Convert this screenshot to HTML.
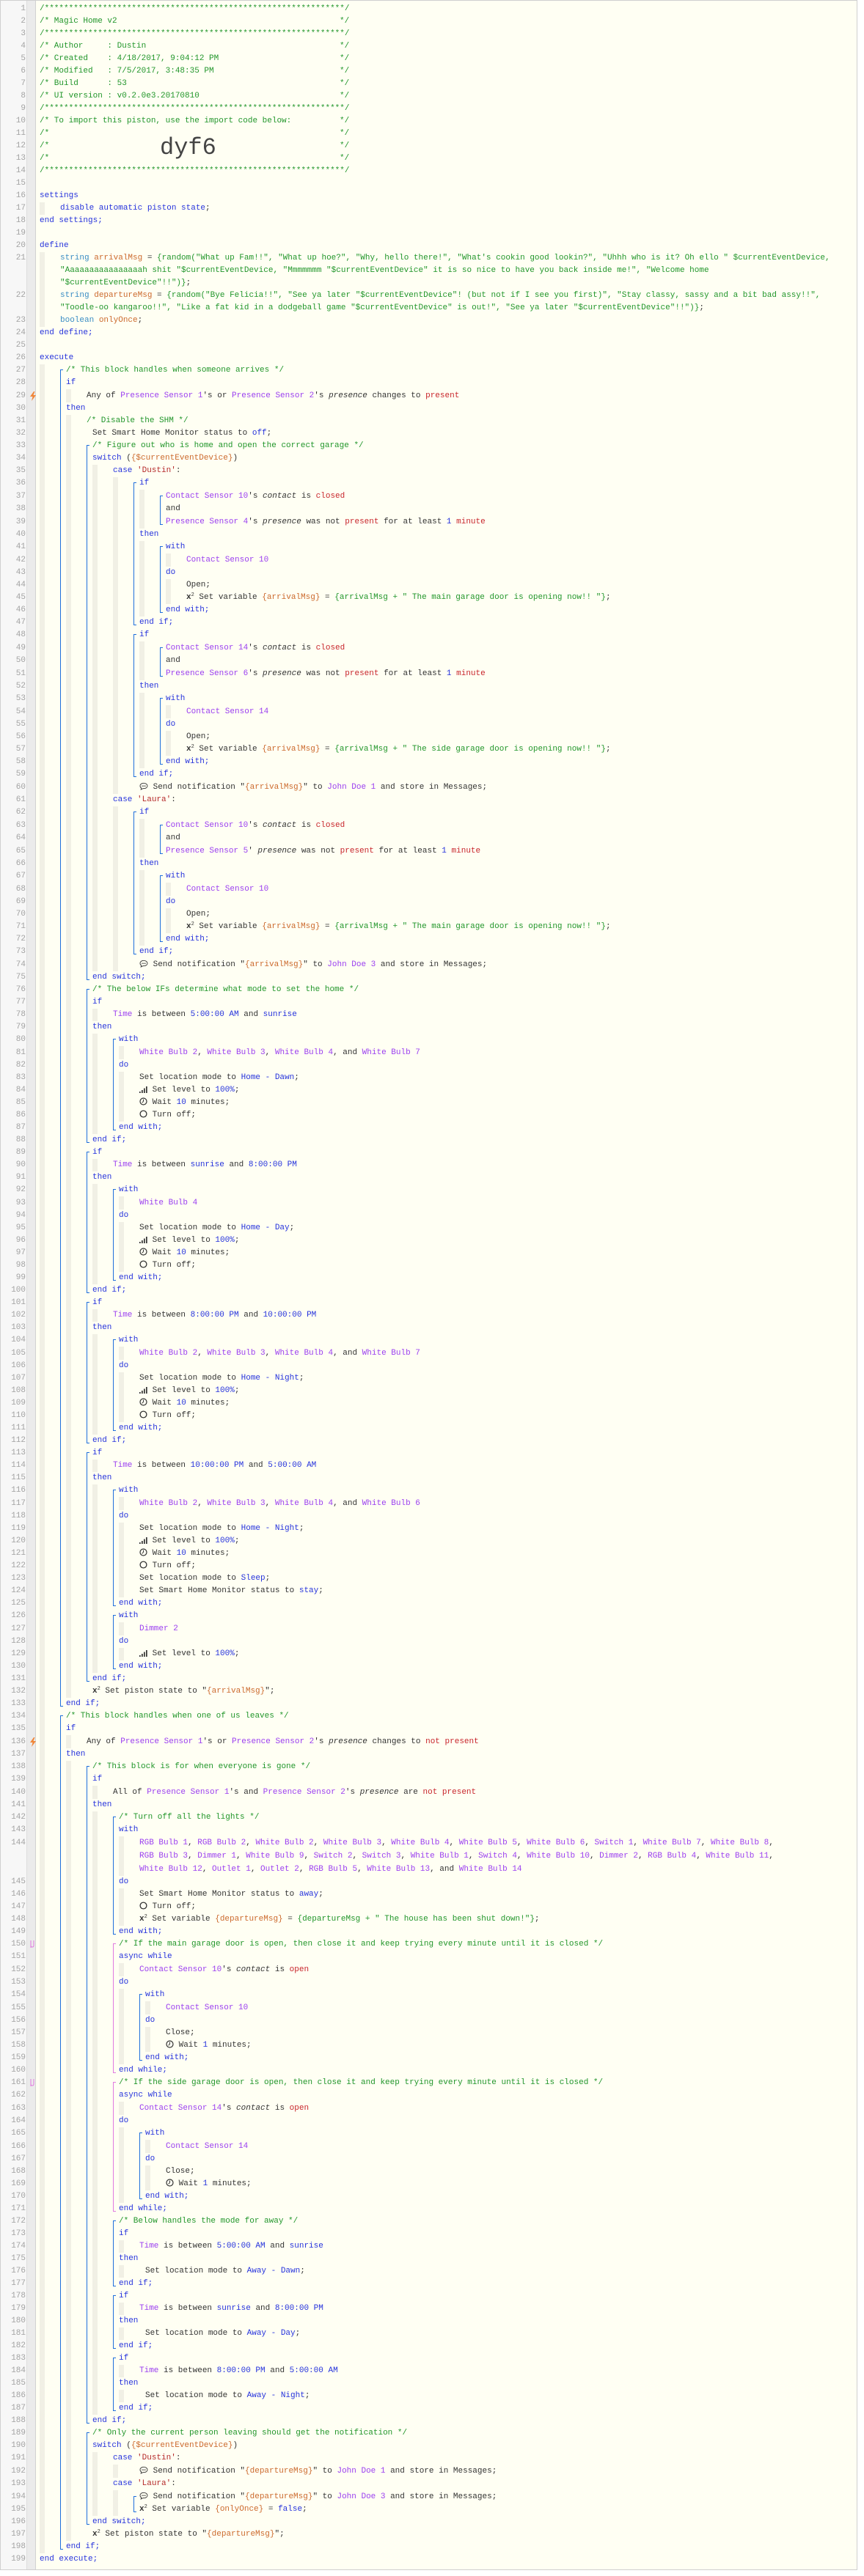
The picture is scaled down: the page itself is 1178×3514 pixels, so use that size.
<!DOCTYPE html>
<html><head><meta charset="utf-8">
<style>
html,body{margin:0;padding:0;background:#fff;width:1178px;height:3514px;overflow:hidden}
#w{position:absolute;left:0;top:0;width:1167px;height:3504px;border:1px solid #cfcfcf;background:#fffff3;overflow:hidden;font-family:"Liberation Mono",monospace;font-size:11px;color:#333}
#gb{position:absolute;left:0;top:0;width:35px;height:100%;background:#f7f7f7;border-right:1px solid #dcdcdc}
#gc{position:absolute;left:36px;top:0;width:11px;height:100%;background:#ebebeb;border-right:1px solid #d2d2d2}
#rows{position:absolute;left:0;top:3px;width:1167px}
.l{display:flex;height:17px;line-height:17px;white-space:pre;position:relative}
.l.h{height:18px;padding-top:1px;box-sizing:border-box}
ln{flex:0 0 53px;box-sizing:border-box;padding-right:19px;text-align:right;color:#a3a3a3;position:relative}
g{flex:0 0 28px;position:relative}
g::before{content:"";position:absolute;left:0;width:7px;top:0;bottom:0;background:#f1f0e5}
t,m,e,f,tq,mq,eq{flex:0 0 8px;position:relative}
m::before,t::before,e::before,mq::before,tq::before,eq::before{content:"";position:absolute;left:0;width:1px;background:#1f6fdc}
t::after,e::after,tq::after,eq::after{content:"";position:absolute;left:0;width:4px;height:1px;background:#1f6fdc}
mq::before,tq::before,eq::before,tq::after,eq::after{background:#e07ae0}
m::before,mq::before{top:0;bottom:0}
t::before,tq::before{top:7px;bottom:0}
t::after,tq::after{top:7px}
e::before,eq::before{top:0;height:12px}
e::after,eq::after{top:11px}
.h g::before,.h m::before,.h mq::before,.h e::before,.h eq::before{top:-1px}
.x{flex:0 0 auto}
k{color:#2633dc}
cm{color:#22962b}
v{color:#cc6a2e}
d{color:#9b3ff0}
r{color:#c8262c}
sl{color:#b52a2a}
ty{color:#3a8dc4}
em{font-style:italic;color:#333}
.ce{position:absolute;left:462px;top:0}
.big{position:absolute;left:217px;top:-5px;font-size:32px;line-height:32px;color:#444}
.x2{font-weight:bold}
.x2 sup{font-size:7px;line-height:0;vertical-align:4px;font-weight:normal}
svg.i{vertical-align:-2px}
.mk{position:absolute;left:40px;top:2px}
</style></head><body>
<div id="w"><div id="gb"></div><div id="gc"></div>
<div id="rows">
<div class="l"><ln>1</ln><span class="x"><cm>/**************************************************************/</cm></span></div>
<div class="l"><ln>2</ln><span class="x"><cm>/* Magic Home v2</cm></span><cm class="ce">*/</cm></div>
<div class="l"><ln>3</ln><span class="x"><cm>/**************************************************************/</cm></span></div>
<div class="l"><ln>4</ln><span class="x"><cm>/* Author     : Dustin</cm></span><cm class="ce">*/</cm></div>
<div class="l"><ln>5</ln><span class="x"><cm>/* Created    : 4/18/2017, 9:04:12 PM</cm></span><cm class="ce">*/</cm></div>
<div class="l"><ln>6</ln><span class="x"><cm>/* Modified   : 7/5/2017, 3:48:35 PM</cm></span><cm class="ce">*/</cm></div>
<div class="l"><ln>7</ln><span class="x"><cm>/* Build      : 53</cm></span><cm class="ce">*/</cm></div>
<div class="l"><ln>8</ln><span class="x"><cm>/* UI version : v0.2.0e3.20170810</cm></span><cm class="ce">*/</cm></div>
<div class="l"><ln>9</ln><span class="x"><cm>/**************************************************************/</cm></span></div>
<div class="l"><ln>10</ln><span class="x"><cm>/* To import this piston, use the import code below:</cm></span><cm class="ce">*/</cm></div>
<div class="l"><ln>11</ln><span class="x"><cm>/*</cm></span><cm class="ce">*/</cm></div>
<div class="l"><ln>12</ln><span class="x"><cm>/*</cm></span><span class="big">dyf6</span><cm class="ce">*/</cm></div>
<div class="l"><ln>13</ln><span class="x"><cm>/*</cm></span><cm class="ce">*/</cm></div>
<div class="l"><ln>14</ln><span class="x"><cm>/**************************************************************/</cm></span></div>
<div class="l"><ln>15</ln></div>
<div class="l"><ln>16</ln><span class="x"><k>settings</k></span></div>
<div class="l"><ln>17</ln><g></g><span class="x"><k>disable automatic piston state</k>;</span></div>
<div class="l"><ln>18</ln><span class="x"><k>end settings;</k></span></div>
<div class="l"><ln>19</ln></div>
<div class="l"><ln>20</ln><span class="x"><k>define</k></span></div>
<div class="l"><ln>21</ln><g></g><span class="x"><ty>string</ty> <v>arrivalMsg</v> = <cm>{random("What up Fam!!", "What up hoe?", "Why, hello there!", "What's cookin good lookin?", "Uhhh who is it? Oh ello " $currentEventDevice,</cm></span></div>
<div class="l"><ln></ln><g></g><span class="x"><cm>"Aaaaaaaaaaaaaaaah shit "$currentEventDevice, "Mmmmmmm "$currentEventDevice" it is so nice to have you back inside me!", "Welcome home</cm></span></div>
<div class="l"><ln></ln><g></g><span class="x"><cm>"$currentEventDevice"!!")}</cm>;</span></div>
<div class="l"><ln>22</ln><g></g><span class="x"><ty>string</ty> <v>departureMsg</v> = <cm>{random("Bye Felicia!!", "See ya later "$currentEventDevice"! (but not if I see you first)", "Stay classy, sassy and a bit bad assy!!",</cm></span></div>
<div class="l"><ln></ln><g></g><span class="x"><cm>"Toodle-oo kangaroo!!", "Like a fat kid in a dodgeball game "$currentEventDevice" is out!", "See ya later "$currentEventDevice"!!")}</cm>;</span></div>
<div class="l"><ln>23</ln><g></g><span class="x"><ty>boolean</ty> <v>onlyOnce</v>;</span></div>
<div class="l"><ln>24</ln><span class="x"><k>end define;</k></span></div>
<div class="l"><ln>25</ln></div>
<div class="l"><ln>26</ln><span class="x"><k>execute</k></span></div>
<div class="l"><ln>27</ln><g></g><t></t><span class="x"><cm>/* This block handles when someone arrives */</cm></span></div>
<div class="l"><ln>28</ln><g></g><m></m><span class="x"><k>if</k></span></div>
<div class="l h"><ln>29<svg class="mk" width="8" height="13" viewBox="0 0 8 13"><polygon points="5,0 0,7 3.5,7 2,13 8,5 4.5,5 6.5,0" fill="#f0873a"/></svg></ln><g></g><m></m><g></g><span class="x">Any of <d>Presence Sensor 1</d>'s or <d>Presence Sensor 2</d>'s <em>presence</em> changes to <r>present</r></span></div>
<div class="l"><ln>30</ln><g></g><m></m><span class="x"><k>then</k></span></div>
<div class="l"><ln>31</ln><g></g><m></m><g></g><span class="x"><cm>/* Disable the SHM */</cm></span></div>
<div class="l"><ln>32</ln><g></g><m></m><g></g><f></f><span class="x">Set Smart Home Monitor status to <k>off</k>;</span></div>
<div class="l"><ln>33</ln><g></g><m></m><g></g><t></t><span class="x"><cm>/* Figure out who is home and open the correct garage */</cm></span></div>
<div class="l"><ln>34</ln><g></g><m></m><g></g><m></m><span class="x"><k>switch</k> (<v>{$currentEventDevice}</v>)</span></div>
<div class="l"><ln>35</ln><g></g><m></m><g></g><m></m><g></g><span class="x"><k>case</k> <sl>'Dustin'</sl>:</span></div>
<div class="l"><ln>36</ln><g></g><m></m><g></g><m></m><g></g><g></g><t></t><span class="x"><k>if</k></span></div>
<div class="l h"><ln>37</ln><g></g><m></m><g></g><m></m><g></g><g></g><m></m><g></g><t></t><span class="x"><d>Contact Sensor 10</d>'s <em>contact</em> is <r>closed</r></span></div>
<div class="l"><ln>38</ln><g></g><m></m><g></g><m></m><g></g><g></g><m></m><g></g><m></m><span class="x">and</span></div>
<div class="l h"><ln>39</ln><g></g><m></m><g></g><m></m><g></g><g></g><m></m><g></g><e></e><span class="x"><d>Presence Sensor 4</d>'s <em>presence</em> was not <r>present</r> for at least <k>1</k> <r>minute</r></span></div>
<div class="l"><ln>40</ln><g></g><m></m><g></g><m></m><g></g><g></g><m></m><span class="x"><k>then</k></span></div>
<div class="l"><ln>41</ln><g></g><m></m><g></g><m></m><g></g><g></g><m></m><g></g><t></t><span class="x"><k>with</k></span></div>
<div class="l h"><ln>42</ln><g></g><m></m><g></g><m></m><g></g><g></g><m></m><g></g><m></m><g></g><span class="x"><d>Contact Sensor 10</d></span></div>
<div class="l"><ln>43</ln><g></g><m></m><g></g><m></m><g></g><g></g><m></m><g></g><m></m><span class="x"><k>do</k></span></div>
<div class="l"><ln>44</ln><g></g><m></m><g></g><m></m><g></g><g></g><m></m><g></g><m></m><g></g><span class="x">Open;</span></div>
<div class="l"><ln>45</ln><g></g><m></m><g></g><m></m><g></g><g></g><m></m><g></g><m></m><g></g><span class="x"><span class="x2">x<sup>2</sup></span> Set variable <v>{arrivalMsg}</v> = <cm>{arrivalMsg + " The main garage door is opening now!! "}</cm>;</span></div>
<div class="l"><ln>46</ln><g></g><m></m><g></g><m></m><g></g><g></g><m></m><g></g><e></e><span class="x"><k>end with;</k></span></div>
<div class="l"><ln>47</ln><g></g><m></m><g></g><m></m><g></g><g></g><e></e><span class="x"><k>end if;</k></span></div>
<div class="l"><ln>48</ln><g></g><m></m><g></g><m></m><g></g><g></g><t></t><span class="x"><k>if</k></span></div>
<div class="l h"><ln>49</ln><g></g><m></m><g></g><m></m><g></g><g></g><m></m><g></g><t></t><span class="x"><d>Contact Sensor 14</d>'s <em>contact</em> is <r>closed</r></span></div>
<div class="l"><ln>50</ln><g></g><m></m><g></g><m></m><g></g><g></g><m></m><g></g><m></m><span class="x">and</span></div>
<div class="l h"><ln>51</ln><g></g><m></m><g></g><m></m><g></g><g></g><m></m><g></g><e></e><span class="x"><d>Presence Sensor 6</d>'s <em>presence</em> was not <r>present</r> for at least <k>1</k> <r>minute</r></span></div>
<div class="l"><ln>52</ln><g></g><m></m><g></g><m></m><g></g><g></g><m></m><span class="x"><k>then</k></span></div>
<div class="l"><ln>53</ln><g></g><m></m><g></g><m></m><g></g><g></g><m></m><g></g><t></t><span class="x"><k>with</k></span></div>
<div class="l h"><ln>54</ln><g></g><m></m><g></g><m></m><g></g><g></g><m></m><g></g><m></m><g></g><span class="x"><d>Contact Sensor 14</d></span></div>
<div class="l"><ln>55</ln><g></g><m></m><g></g><m></m><g></g><g></g><m></m><g></g><m></m><span class="x"><k>do</k></span></div>
<div class="l"><ln>56</ln><g></g><m></m><g></g><m></m><g></g><g></g><m></m><g></g><m></m><g></g><span class="x">Open;</span></div>
<div class="l"><ln>57</ln><g></g><m></m><g></g><m></m><g></g><g></g><m></m><g></g><m></m><g></g><span class="x"><span class="x2">x<sup>2</sup></span> Set variable <v>{arrivalMsg}</v> = <cm>{arrivalMsg + " The side garage door is opening now!! "}</cm>;</span></div>
<div class="l"><ln>58</ln><g></g><m></m><g></g><m></m><g></g><g></g><m></m><g></g><e></e><span class="x"><k>end with;</k></span></div>
<div class="l"><ln>59</ln><g></g><m></m><g></g><m></m><g></g><g></g><e></e><span class="x"><k>end if;</k></span></div>
<div class="l h"><ln>60</ln><g></g><m></m><g></g><m></m><g></g><g></g><f></f><span class="x"><svg class="i" width="12" height="11" viewBox="0 0 12 11"><path d="M6 1.3C3 1.3 1 3 1 5.1c0 1.2.7 2.2 1.8 2.9L2.2 10l2.8-1.4c.3.1.7.1 1 .1 3 0 5-1.7 5-3.6S9 1.3 6 1.3z" fill="none" stroke="#333" stroke-width=".9"/><circle cx="4" cy="5.2" r=".7" fill="#333"/><circle cx="6" cy="5.2" r=".7" fill="#333"/><circle cx="8" cy="5.2" r=".7" fill="#333"/></svg> Send notification "<v>{arrivalMsg}</v>" to <d>John Doe 1</d> and store in Messages;</span></div>
<div class="l"><ln>61</ln><g></g><m></m><g></g><m></m><g></g><span class="x"><k>case</k> <sl>'Laura'</sl>:</span></div>
<div class="l"><ln>62</ln><g></g><m></m><g></g><m></m><g></g><g></g><t></t><span class="x"><k>if</k></span></div>
<div class="l h"><ln>63</ln><g></g><m></m><g></g><m></m><g></g><g></g><m></m><g></g><t></t><span class="x"><d>Contact Sensor 10</d>'s <em>contact</em> is <r>closed</r></span></div>
<div class="l"><ln>64</ln><g></g><m></m><g></g><m></m><g></g><g></g><m></m><g></g><m></m><span class="x">and</span></div>
<div class="l h"><ln>65</ln><g></g><m></m><g></g><m></m><g></g><g></g><m></m><g></g><e></e><span class="x"><d>Presence Sensor 5</d>' <em>presence</em> was not <r>present</r> for at least <k>1</k> <r>minute</r></span></div>
<div class="l"><ln>66</ln><g></g><m></m><g></g><m></m><g></g><g></g><m></m><span class="x"><k>then</k></span></div>
<div class="l"><ln>67</ln><g></g><m></m><g></g><m></m><g></g><g></g><m></m><g></g><t></t><span class="x"><k>with</k></span></div>
<div class="l h"><ln>68</ln><g></g><m></m><g></g><m></m><g></g><g></g><m></m><g></g><m></m><g></g><span class="x"><d>Contact Sensor 10</d></span></div>
<div class="l"><ln>69</ln><g></g><m></m><g></g><m></m><g></g><g></g><m></m><g></g><m></m><span class="x"><k>do</k></span></div>
<div class="l"><ln>70</ln><g></g><m></m><g></g><m></m><g></g><g></g><m></m><g></g><m></m><g></g><span class="x">Open;</span></div>
<div class="l"><ln>71</ln><g></g><m></m><g></g><m></m><g></g><g></g><m></m><g></g><m></m><g></g><span class="x"><span class="x2">x<sup>2</sup></span> Set variable <v>{arrivalMsg}</v> = <cm>{arrivalMsg + " The main garage door is opening now!! "}</cm>;</span></div>
<div class="l"><ln>72</ln><g></g><m></m><g></g><m></m><g></g><g></g><m></m><g></g><e></e><span class="x"><k>end with;</k></span></div>
<div class="l"><ln>73</ln><g></g><m></m><g></g><m></m><g></g><g></g><e></e><span class="x"><k>end if;</k></span></div>
<div class="l h"><ln>74</ln><g></g><m></m><g></g><m></m><g></g><g></g><f></f><span class="x"><svg class="i" width="12" height="11" viewBox="0 0 12 11"><path d="M6 1.3C3 1.3 1 3 1 5.1c0 1.2.7 2.2 1.8 2.9L2.2 10l2.8-1.4c.3.1.7.1 1 .1 3 0 5-1.7 5-3.6S9 1.3 6 1.3z" fill="none" stroke="#333" stroke-width=".9"/><circle cx="4" cy="5.2" r=".7" fill="#333"/><circle cx="6" cy="5.2" r=".7" fill="#333"/><circle cx="8" cy="5.2" r=".7" fill="#333"/></svg> Send notification "<v>{arrivalMsg}</v>" to <d>John Doe 3</d> and store in Messages;</span></div>
<div class="l"><ln>75</ln><g></g><m></m><g></g><e></e><span class="x"><k>end switch;</k></span></div>
<div class="l"><ln>76</ln><g></g><m></m><g></g><t></t><span class="x"><cm>/* The below IFs determine what mode to set the home */</cm></span></div>
<div class="l"><ln>77</ln><g></g><m></m><g></g><m></m><span class="x"><k>if</k></span></div>
<div class="l"><ln>78</ln><g></g><m></m><g></g><m></m><g></g><span class="x"><d>Time</d> is between <k>5:00:00 AM</k> and <k>sunrise</k></span></div>
<div class="l"><ln>79</ln><g></g><m></m><g></g><m></m><span class="x"><k>then</k></span></div>
<div class="l"><ln>80</ln><g></g><m></m><g></g><m></m><g></g><t></t><span class="x"><k>with</k></span></div>
<div class="l h"><ln>81</ln><g></g><m></m><g></g><m></m><g></g><m></m><g></g><span class="x"><d>White Bulb 2</d>, <d>White Bulb 3</d>, <d>White Bulb 4</d>, and <d>White Bulb 7</d></span></div>
<div class="l"><ln>82</ln><g></g><m></m><g></g><m></m><g></g><m></m><span class="x"><k>do</k></span></div>
<div class="l"><ln>83</ln><g></g><m></m><g></g><m></m><g></g><m></m><g></g><span class="x">Set location mode to <k>Home - Dawn</k>;</span></div>
<div class="l"><ln>84</ln><g></g><m></m><g></g><m></m><g></g><m></m><g></g><span class="x"><svg class="i" width="11" height="10" viewBox="0 0 11 10"><rect x="0" y="8" width="1.7" height="2" fill="#333"/><rect x="3" y="6" width="1.7" height="4" fill="#333"/><rect x="6" y="3.5" width="1.7" height="6.5" fill="#333"/><rect x="9" y="1" width="1.7" height="9" fill="#333"/></svg> Set level to <k>100%</k>;</span></div>
<div class="l"><ln>85</ln><g></g><m></m><g></g><m></m><g></g><m></m><g></g><span class="x"><svg class="i" width="11" height="11" viewBox="0 0 11 11"><circle cx="5.5" cy="5.5" r="4.5" fill="none" stroke="#333" stroke-width="1.2"/><path d="M5.5 5.5V2.6M5.5 5.5L3.6 7.2" stroke="#333" stroke-width="1"/></svg> Wait <k>10</k> minutes;</span></div>
<div class="l"><ln>86</ln><g></g><m></m><g></g><m></m><g></g><m></m><g></g><span class="x"><svg class="i" width="11" height="11" viewBox="0 0 11 11"><circle cx="5.5" cy="5.5" r="4.4" fill="none" stroke="#333" stroke-width="1.3"/></svg> Turn off;</span></div>
<div class="l"><ln>87</ln><g></g><m></m><g></g><m></m><g></g><e></e><span class="x"><k>end with;</k></span></div>
<div class="l"><ln>88</ln><g></g><m></m><g></g><e></e><span class="x"><k>end if;</k></span></div>
<div class="l"><ln>89</ln><g></g><m></m><g></g><t></t><span class="x"><k>if</k></span></div>
<div class="l"><ln>90</ln><g></g><m></m><g></g><m></m><g></g><span class="x"><d>Time</d> is between <k>sunrise</k> and <k>8:00:00 PM</k></span></div>
<div class="l"><ln>91</ln><g></g><m></m><g></g><m></m><span class="x"><k>then</k></span></div>
<div class="l"><ln>92</ln><g></g><m></m><g></g><m></m><g></g><t></t><span class="x"><k>with</k></span></div>
<div class="l h"><ln>93</ln><g></g><m></m><g></g><m></m><g></g><m></m><g></g><span class="x"><d>White Bulb 4</d></span></div>
<div class="l"><ln>94</ln><g></g><m></m><g></g><m></m><g></g><m></m><span class="x"><k>do</k></span></div>
<div class="l"><ln>95</ln><g></g><m></m><g></g><m></m><g></g><m></m><g></g><span class="x">Set location mode to <k>Home - Day</k>;</span></div>
<div class="l"><ln>96</ln><g></g><m></m><g></g><m></m><g></g><m></m><g></g><span class="x"><svg class="i" width="11" height="10" viewBox="0 0 11 10"><rect x="0" y="8" width="1.7" height="2" fill="#333"/><rect x="3" y="6" width="1.7" height="4" fill="#333"/><rect x="6" y="3.5" width="1.7" height="6.5" fill="#333"/><rect x="9" y="1" width="1.7" height="9" fill="#333"/></svg> Set level to <k>100%</k>;</span></div>
<div class="l"><ln>97</ln><g></g><m></m><g></g><m></m><g></g><m></m><g></g><span class="x"><svg class="i" width="11" height="11" viewBox="0 0 11 11"><circle cx="5.5" cy="5.5" r="4.5" fill="none" stroke="#333" stroke-width="1.2"/><path d="M5.5 5.5V2.6M5.5 5.5L3.6 7.2" stroke="#333" stroke-width="1"/></svg> Wait <k>10</k> minutes;</span></div>
<div class="l"><ln>98</ln><g></g><m></m><g></g><m></m><g></g><m></m><g></g><span class="x"><svg class="i" width="11" height="11" viewBox="0 0 11 11"><circle cx="5.5" cy="5.5" r="4.4" fill="none" stroke="#333" stroke-width="1.3"/></svg> Turn off;</span></div>
<div class="l"><ln>99</ln><g></g><m></m><g></g><m></m><g></g><e></e><span class="x"><k>end with;</k></span></div>
<div class="l"><ln>100</ln><g></g><m></m><g></g><e></e><span class="x"><k>end if;</k></span></div>
<div class="l"><ln>101</ln><g></g><m></m><g></g><t></t><span class="x"><k>if</k></span></div>
<div class="l"><ln>102</ln><g></g><m></m><g></g><m></m><g></g><span class="x"><d>Time</d> is between <k>8:00:00 PM</k> and <k>10:00:00 PM</k></span></div>
<div class="l"><ln>103</ln><g></g><m></m><g></g><m></m><span class="x"><k>then</k></span></div>
<div class="l"><ln>104</ln><g></g><m></m><g></g><m></m><g></g><t></t><span class="x"><k>with</k></span></div>
<div class="l h"><ln>105</ln><g></g><m></m><g></g><m></m><g></g><m></m><g></g><span class="x"><d>White Bulb 2</d>, <d>White Bulb 3</d>, <d>White Bulb 4</d>, and <d>White Bulb 7</d></span></div>
<div class="l"><ln>106</ln><g></g><m></m><g></g><m></m><g></g><m></m><span class="x"><k>do</k></span></div>
<div class="l"><ln>107</ln><g></g><m></m><g></g><m></m><g></g><m></m><g></g><span class="x">Set location mode to <k>Home - Night</k>;</span></div>
<div class="l"><ln>108</ln><g></g><m></m><g></g><m></m><g></g><m></m><g></g><span class="x"><svg class="i" width="11" height="10" viewBox="0 0 11 10"><rect x="0" y="8" width="1.7" height="2" fill="#333"/><rect x="3" y="6" width="1.7" height="4" fill="#333"/><rect x="6" y="3.5" width="1.7" height="6.5" fill="#333"/><rect x="9" y="1" width="1.7" height="9" fill="#333"/></svg> Set level to <k>100%</k>;</span></div>
<div class="l"><ln>109</ln><g></g><m></m><g></g><m></m><g></g><m></m><g></g><span class="x"><svg class="i" width="11" height="11" viewBox="0 0 11 11"><circle cx="5.5" cy="5.5" r="4.5" fill="none" stroke="#333" stroke-width="1.2"/><path d="M5.5 5.5V2.6M5.5 5.5L3.6 7.2" stroke="#333" stroke-width="1"/></svg> Wait <k>10</k> minutes;</span></div>
<div class="l"><ln>110</ln><g></g><m></m><g></g><m></m><g></g><m></m><g></g><span class="x"><svg class="i" width="11" height="11" viewBox="0 0 11 11"><circle cx="5.5" cy="5.5" r="4.4" fill="none" stroke="#333" stroke-width="1.3"/></svg> Turn off;</span></div>
<div class="l"><ln>111</ln><g></g><m></m><g></g><m></m><g></g><e></e><span class="x"><k>end with;</k></span></div>
<div class="l"><ln>112</ln><g></g><m></m><g></g><e></e><span class="x"><k>end if;</k></span></div>
<div class="l"><ln>113</ln><g></g><m></m><g></g><t></t><span class="x"><k>if</k></span></div>
<div class="l"><ln>114</ln><g></g><m></m><g></g><m></m><g></g><span class="x"><d>Time</d> is between <k>10:00:00 PM</k> and <k>5:00:00 AM</k></span></div>
<div class="l"><ln>115</ln><g></g><m></m><g></g><m></m><span class="x"><k>then</k></span></div>
<div class="l"><ln>116</ln><g></g><m></m><g></g><m></m><g></g><t></t><span class="x"><k>with</k></span></div>
<div class="l h"><ln>117</ln><g></g><m></m><g></g><m></m><g></g><m></m><g></g><span class="x"><d>White Bulb 2</d>, <d>White Bulb 3</d>, <d>White Bulb 4</d>, and <d>White Bulb 6</d></span></div>
<div class="l"><ln>118</ln><g></g><m></m><g></g><m></m><g></g><m></m><span class="x"><k>do</k></span></div>
<div class="l"><ln>119</ln><g></g><m></m><g></g><m></m><g></g><m></m><g></g><span class="x">Set location mode to <k>Home - Night</k>;</span></div>
<div class="l"><ln>120</ln><g></g><m></m><g></g><m></m><g></g><m></m><g></g><span class="x"><svg class="i" width="11" height="10" viewBox="0 0 11 10"><rect x="0" y="8" width="1.7" height="2" fill="#333"/><rect x="3" y="6" width="1.7" height="4" fill="#333"/><rect x="6" y="3.5" width="1.7" height="6.5" fill="#333"/><rect x="9" y="1" width="1.7" height="9" fill="#333"/></svg> Set level to <k>100%</k>;</span></div>
<div class="l"><ln>121</ln><g></g><m></m><g></g><m></m><g></g><m></m><g></g><span class="x"><svg class="i" width="11" height="11" viewBox="0 0 11 11"><circle cx="5.5" cy="5.5" r="4.5" fill="none" stroke="#333" stroke-width="1.2"/><path d="M5.5 5.5V2.6M5.5 5.5L3.6 7.2" stroke="#333" stroke-width="1"/></svg> Wait <k>10</k> minutes;</span></div>
<div class="l"><ln>122</ln><g></g><m></m><g></g><m></m><g></g><m></m><g></g><span class="x"><svg class="i" width="11" height="11" viewBox="0 0 11 11"><circle cx="5.5" cy="5.5" r="4.4" fill="none" stroke="#333" stroke-width="1.3"/></svg> Turn off;</span></div>
<div class="l"><ln>123</ln><g></g><m></m><g></g><m></m><g></g><m></m><g></g><span class="x">Set location mode to <k>Sleep</k>;</span></div>
<div class="l"><ln>124</ln><g></g><m></m><g></g><m></m><g></g><m></m><g></g><span class="x">Set Smart Home Monitor status to <k>stay</k>;</span></div>
<div class="l"><ln>125</ln><g></g><m></m><g></g><m></m><g></g><e></e><span class="x"><k>end with;</k></span></div>
<div class="l"><ln>126</ln><g></g><m></m><g></g><m></m><g></g><t></t><span class="x"><k>with</k></span></div>
<div class="l h"><ln>127</ln><g></g><m></m><g></g><m></m><g></g><m></m><g></g><span class="x"><d>Dimmer 2</d></span></div>
<div class="l"><ln>128</ln><g></g><m></m><g></g><m></m><g></g><m></m><span class="x"><k>do</k></span></div>
<div class="l"><ln>129</ln><g></g><m></m><g></g><m></m><g></g><m></m><g></g><span class="x"><svg class="i" width="11" height="10" viewBox="0 0 11 10"><rect x="0" y="8" width="1.7" height="2" fill="#333"/><rect x="3" y="6" width="1.7" height="4" fill="#333"/><rect x="6" y="3.5" width="1.7" height="6.5" fill="#333"/><rect x="9" y="1" width="1.7" height="9" fill="#333"/></svg> Set level to <k>100%</k>;</span></div>
<div class="l"><ln>130</ln><g></g><m></m><g></g><m></m><g></g><e></e><span class="x"><k>end with;</k></span></div>
<div class="l"><ln>131</ln><g></g><m></m><g></g><e></e><span class="x"><k>end if;</k></span></div>
<div class="l"><ln>132</ln><g></g><m></m><g></g><f></f><span class="x"><span class="x2">x<sup>2</sup></span> Set piston state to "<v>{arrivalMsg}</v>";</span></div>
<div class="l"><ln>133</ln><g></g><e></e><span class="x"><k>end if;</k></span></div>
<div class="l"><ln>134</ln><g></g><t></t><span class="x"><cm>/* This block handles when one of us leaves */</cm></span></div>
<div class="l"><ln>135</ln><g></g><m></m><span class="x"><k>if</k></span></div>
<div class="l h"><ln>136<svg class="mk" width="8" height="13" viewBox="0 0 8 13"><polygon points="5,0 0,7 3.5,7 2,13 8,5 4.5,5 6.5,0" fill="#f0873a"/></svg></ln><g></g><m></m><g></g><span class="x">Any of <d>Presence Sensor 1</d>'s or <d>Presence Sensor 2</d>'s <em>presence</em> changes to <r>not present</r></span></div>
<div class="l"><ln>137</ln><g></g><m></m><span class="x"><k>then</k></span></div>
<div class="l"><ln>138</ln><g></g><m></m><g></g><t></t><span class="x"><cm>/* This block is for when everyone is gone */</cm></span></div>
<div class="l"><ln>139</ln><g></g><m></m><g></g><m></m><span class="x"><k>if</k></span></div>
<div class="l h"><ln>140</ln><g></g><m></m><g></g><m></m><g></g><span class="x">All of <d>Presence Sensor 1</d>'s and <d>Presence Sensor 2</d>'s <em>presence</em> are <r>not present</r></span></div>
<div class="l"><ln>141</ln><g></g><m></m><g></g><m></m><span class="x"><k>then</k></span></div>
<div class="l"><ln>142</ln><g></g><m></m><g></g><m></m><g></g><t></t><span class="x"><cm>/* Turn off all the lights */</cm></span></div>
<div class="l"><ln>143</ln><g></g><m></m><g></g><m></m><g></g><m></m><span class="x"><k>with</k></span></div>
<div class="l h"><ln>144</ln><g></g><m></m><g></g><m></m><g></g><m></m><g></g><span class="x"><d>RGB Bulb 1</d>, <d>RGB Bulb 2</d>, <d>White Bulb 2</d>, <d>White Bulb 3</d>, <d>White Bulb 4</d>, <d>White Bulb 5</d>, <d>White Bulb 6</d>, <d>Switch 1</d>, <d>White Bulb 7</d>, <d>White Bulb 8</d>,</span></div>
<div class="l h"><ln></ln><g></g><m></m><g></g><m></m><g></g><m></m><g></g><span class="x"><d>RGB Bulb 3</d>, <d>Dimmer 1</d>, <d>White Bulb 9</d>, <d>Switch 2</d>, <d>Switch 3</d>, <d>White Bulb 1</d>, <d>Switch 4</d>, <d>White Bulb 10</d>, <d>Dimmer 2</d>, <d>RGB Bulb 4</d>, <d>White Bulb 11</d>,</span></div>
<div class="l h"><ln></ln><g></g><m></m><g></g><m></m><g></g><m></m><g></g><span class="x"><d>White Bulb 12</d>, <d>Outlet 1</d>, <d>Outlet 2</d>, <d>RGB Bulb 5</d>, <d>White Bulb 13</d>, and <d>White Bulb 14</d></span></div>
<div class="l"><ln>145</ln><g></g><m></m><g></g><m></m><g></g><m></m><span class="x"><k>do</k></span></div>
<div class="l"><ln>146</ln><g></g><m></m><g></g><m></m><g></g><m></m><g></g><span class="x">Set Smart Home Monitor status to <k>away</k>;</span></div>
<div class="l"><ln>147</ln><g></g><m></m><g></g><m></m><g></g><m></m><g></g><span class="x"><svg class="i" width="11" height="11" viewBox="0 0 11 11"><circle cx="5.5" cy="5.5" r="4.4" fill="none" stroke="#333" stroke-width="1.3"/></svg> Turn off;</span></div>
<div class="l"><ln>148</ln><g></g><m></m><g></g><m></m><g></g><m></m><g></g><span class="x"><span class="x2">x<sup>2</sup></span> Set variable <v>{departureMsg}</v> = <cm>{departureMsg + " The house has been shut down!"}</cm>;</span></div>
<div class="l"><ln>149</ln><g></g><m></m><g></g><m></m><g></g><e></e><span class="x"><k>end with;</k></span></div>
<div class="l"><ln>150<svg class="mk" width="7" height="12" viewBox="0 0 7 12"><path d="M1 1v7c0 1.5 1 2 2 2s2-.5 2-2V1M1 8v3" fill="none" stroke="#e07ae0" stroke-width="1"/></svg></ln><g></g><m></m><g></g><m></m><g></g><tq></tq><span class="x"><cm>/* If the main garage door is open, then close it and keep trying every minute until it is closed */</cm></span></div>
<div class="l"><ln>151</ln><g></g><m></m><g></g><m></m><g></g><mq></mq><span class="x"><k>async while</k></span></div>
<div class="l h"><ln>152</ln><g></g><m></m><g></g><m></m><g></g><mq></mq><g></g><span class="x"><d>Contact Sensor 10</d>'s <em>contact</em> is <r>open</r></span></div>
<div class="l"><ln>153</ln><g></g><m></m><g></g><m></m><g></g><mq></mq><span class="x"><k>do</k></span></div>
<div class="l"><ln>154</ln><g></g><m></m><g></g><m></m><g></g><mq></mq><g></g><t></t><span class="x"><k>with</k></span></div>
<div class="l h"><ln>155</ln><g></g><m></m><g></g><m></m><g></g><mq></mq><g></g><m></m><g></g><span class="x"><d>Contact Sensor 10</d></span></div>
<div class="l"><ln>156</ln><g></g><m></m><g></g><m></m><g></g><mq></mq><g></g><m></m><span class="x"><k>do</k></span></div>
<div class="l"><ln>157</ln><g></g><m></m><g></g><m></m><g></g><mq></mq><g></g><m></m><g></g><span class="x">Close;</span></div>
<div class="l"><ln>158</ln><g></g><m></m><g></g><m></m><g></g><mq></mq><g></g><m></m><g></g><span class="x"><svg class="i" width="11" height="11" viewBox="0 0 11 11"><circle cx="5.5" cy="5.5" r="4.5" fill="none" stroke="#333" stroke-width="1.2"/><path d="M5.5 5.5V2.6M5.5 5.5L3.6 7.2" stroke="#333" stroke-width="1"/></svg> Wait <k>1</k> minutes;</span></div>
<div class="l"><ln>159</ln><g></g><m></m><g></g><m></m><g></g><mq></mq><g></g><e></e><span class="x"><k>end with;</k></span></div>
<div class="l"><ln>160</ln><g></g><m></m><g></g><m></m><g></g><eq></eq><span class="x"><k>end while;</k></span></div>
<div class="l"><ln>161<svg class="mk" width="7" height="12" viewBox="0 0 7 12"><path d="M1 1v7c0 1.5 1 2 2 2s2-.5 2-2V1M1 8v3" fill="none" stroke="#e07ae0" stroke-width="1"/></svg></ln><g></g><m></m><g></g><m></m><g></g><tq></tq><span class="x"><cm>/* If the side garage door is open, then close it and keep trying every minute until it is closed */</cm></span></div>
<div class="l"><ln>162</ln><g></g><m></m><g></g><m></m><g></g><mq></mq><span class="x"><k>async while</k></span></div>
<div class="l h"><ln>163</ln><g></g><m></m><g></g><m></m><g></g><mq></mq><g></g><span class="x"><d>Contact Sensor 14</d>'s <em>contact</em> is <r>open</r></span></div>
<div class="l"><ln>164</ln><g></g><m></m><g></g><m></m><g></g><mq></mq><span class="x"><k>do</k></span></div>
<div class="l"><ln>165</ln><g></g><m></m><g></g><m></m><g></g><mq></mq><g></g><t></t><span class="x"><k>with</k></span></div>
<div class="l h"><ln>166</ln><g></g><m></m><g></g><m></m><g></g><mq></mq><g></g><m></m><g></g><span class="x"><d>Contact Sensor 14</d></span></div>
<div class="l"><ln>167</ln><g></g><m></m><g></g><m></m><g></g><mq></mq><g></g><m></m><span class="x"><k>do</k></span></div>
<div class="l"><ln>168</ln><g></g><m></m><g></g><m></m><g></g><mq></mq><g></g><m></m><g></g><span class="x">Close;</span></div>
<div class="l"><ln>169</ln><g></g><m></m><g></g><m></m><g></g><mq></mq><g></g><m></m><g></g><span class="x"><svg class="i" width="11" height="11" viewBox="0 0 11 11"><circle cx="5.5" cy="5.5" r="4.5" fill="none" stroke="#333" stroke-width="1.2"/><path d="M5.5 5.5V2.6M5.5 5.5L3.6 7.2" stroke="#333" stroke-width="1"/></svg> Wait <k>1</k> minutes;</span></div>
<div class="l"><ln>170</ln><g></g><m></m><g></g><m></m><g></g><mq></mq><g></g><e></e><span class="x"><k>end with;</k></span></div>
<div class="l"><ln>171</ln><g></g><m></m><g></g><m></m><g></g><eq></eq><span class="x"><k>end while;</k></span></div>
<div class="l"><ln>172</ln><g></g><m></m><g></g><m></m><g></g><t></t><span class="x"><cm>/* Below handles the mode for away */</cm></span></div>
<div class="l"><ln>173</ln><g></g><m></m><g></g><m></m><g></g><m></m><span class="x"><k>if</k></span></div>
<div class="l"><ln>174</ln><g></g><m></m><g></g><m></m><g></g><m></m><g></g><span class="x"><d>Time</d> is between <k>5:00:00 AM</k> and <k>sunrise</k></span></div>
<div class="l"><ln>175</ln><g></g><m></m><g></g><m></m><g></g><m></m><span class="x"><k>then</k></span></div>
<div class="l"><ln>176</ln><g></g><m></m><g></g><m></m><g></g><m></m><g></g><f></f><span class="x">Set location mode to <k>Away - Dawn</k>;</span></div>
<div class="l"><ln>177</ln><g></g><m></m><g></g><m></m><g></g><e></e><span class="x"><k>end if;</k></span></div>
<div class="l"><ln>178</ln><g></g><m></m><g></g><m></m><g></g><t></t><span class="x"><k>if</k></span></div>
<div class="l"><ln>179</ln><g></g><m></m><g></g><m></m><g></g><m></m><g></g><span class="x"><d>Time</d> is between <k>sunrise</k> and <k>8:00:00 PM</k></span></div>
<div class="l"><ln>180</ln><g></g><m></m><g></g><m></m><g></g><m></m><span class="x"><k>then</k></span></div>
<div class="l"><ln>181</ln><g></g><m></m><g></g><m></m><g></g><m></m><g></g><f></f><span class="x">Set location mode to <k>Away - Day</k>;</span></div>
<div class="l"><ln>182</ln><g></g><m></m><g></g><m></m><g></g><e></e><span class="x"><k>end if;</k></span></div>
<div class="l"><ln>183</ln><g></g><m></m><g></g><m></m><g></g><t></t><span class="x"><k>if</k></span></div>
<div class="l"><ln>184</ln><g></g><m></m><g></g><m></m><g></g><m></m><g></g><span class="x"><d>Time</d> is between <k>8:00:00 PM</k> and <k>5:00:00 AM</k></span></div>
<div class="l"><ln>185</ln><g></g><m></m><g></g><m></m><g></g><m></m><span class="x"><k>then</k></span></div>
<div class="l"><ln>186</ln><g></g><m></m><g></g><m></m><g></g><m></m><g></g><f></f><span class="x">Set location mode to <k>Away - Night</k>;</span></div>
<div class="l"><ln>187</ln><g></g><m></m><g></g><m></m><g></g><e></e><span class="x"><k>end if;</k></span></div>
<div class="l"><ln>188</ln><g></g><m></m><g></g><e></e><span class="x"><k>end if;</k></span></div>
<div class="l"><ln>189</ln><g></g><m></m><g></g><t></t><span class="x"><cm>/* Only the current person leaving should get the notification */</cm></span></div>
<div class="l"><ln>190</ln><g></g><m></m><g></g><m></m><span class="x"><k>switch</k> (<v>{$currentEventDevice}</v>)</span></div>
<div class="l"><ln>191</ln><g></g><m></m><g></g><m></m><g></g><span class="x"><k>case</k> <sl>'Dustin'</sl>:</span></div>
<div class="l h"><ln>192</ln><g></g><m></m><g></g><m></m><g></g><g></g><f></f><span class="x"><svg class="i" width="12" height="11" viewBox="0 0 12 11"><path d="M6 1.3C3 1.3 1 3 1 5.1c0 1.2.7 2.2 1.8 2.9L2.2 10l2.8-1.4c.3.1.7.1 1 .1 3 0 5-1.7 5-3.6S9 1.3 6 1.3z" fill="none" stroke="#333" stroke-width=".9"/><circle cx="4" cy="5.2" r=".7" fill="#333"/><circle cx="6" cy="5.2" r=".7" fill="#333"/><circle cx="8" cy="5.2" r=".7" fill="#333"/></svg> Send notification "<v>{departureMsg}</v>" to <d>John Doe 1</d> and store in Messages;</span></div>
<div class="l"><ln>193</ln><g></g><m></m><g></g><m></m><g></g><span class="x"><k>case</k> <sl>'Laura'</sl>:</span></div>
<div class="l h"><ln>194</ln><g></g><m></m><g></g><m></m><g></g><g></g><t></t><span class="x"><svg class="i" width="12" height="11" viewBox="0 0 12 11"><path d="M6 1.3C3 1.3 1 3 1 5.1c0 1.2.7 2.2 1.8 2.9L2.2 10l2.8-1.4c.3.1.7.1 1 .1 3 0 5-1.7 5-3.6S9 1.3 6 1.3z" fill="none" stroke="#333" stroke-width=".9"/><circle cx="4" cy="5.2" r=".7" fill="#333"/><circle cx="6" cy="5.2" r=".7" fill="#333"/><circle cx="8" cy="5.2" r=".7" fill="#333"/></svg> Send notification "<v>{departureMsg}</v>" to <d>John Doe 3</d> and store in Messages;</span></div>
<div class="l"><ln>195</ln><g></g><m></m><g></g><m></m><g></g><g></g><e></e><span class="x"><span class="x2">x<sup>2</sup></span> Set variable <v>{onlyOnce}</v> = <k>false</k>;</span></div>
<div class="l"><ln>196</ln><g></g><m></m><g></g><e></e><span class="x"><k>end switch;</k></span></div>
<div class="l"><ln>197</ln><g></g><m></m><g></g><f></f><span class="x"><span class="x2">x<sup>2</sup></span> Set piston state to "<v>{departureMsg}</v>";</span></div>
<div class="l"><ln>198</ln><g></g><e></e><span class="x"><k>end if;</k></span></div>
<div class="l"><ln>199</ln><span class="x"><k>end execute;</k></span></div>
</div></div>
</body></html>
